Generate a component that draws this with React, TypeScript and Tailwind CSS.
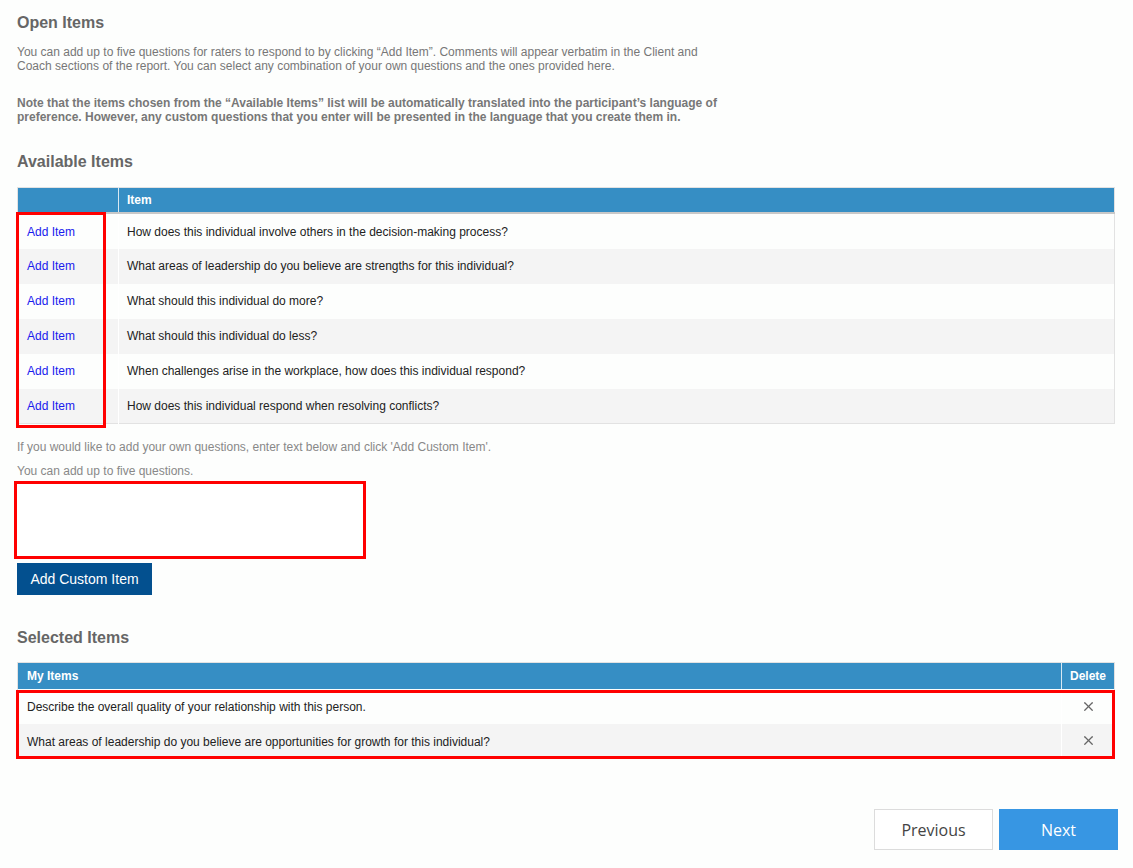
import { X } from "lucide-react";

const availableItems = [
  "How does this individual involve others in the decision-making process?",
  "What areas of leadership do you believe are strengths for this individual?",
  "What should this individual do more?",
  "What should this individual do less?",
  "When challenges arise in the workplace, how does this individual respond?",
  "How does this individual respond when resolving conflicts?",
];

const selectedItems = [
  "Describe the overall quality of your relationship with this person.",
  "What areas of leadership do you believe are opportunities for growth for this individual?",
];

export default function App() {
  return (
    <div className="min-h-screen bg-[#fdfefd] font-['Liberation_Sans',Arial,sans-serif] text-[12px] text-[#333]">
      <div className="pl-[17px] pr-[15px] pt-[13px] pb-[18px]">
        {/* Intro */}
        <h2 className="text-[16px] leading-[20px] font-bold text-[#666]">Open Items</h2>
        <p className="mt-[12px] max-w-[710px] leading-[14px] text-[#777]">
          You can add up to five questions for raters to respond to by clicking “Add Item”. Comments will appear
          verbatim in the Client and Coach sections of the report. You can select any combination of your own
          questions and the ones provided here.
        </p>
        <p className="mt-[23px] max-w-[710px] leading-[14px] font-bold text-[#777]">
          Note that the items chosen from the “Available Items” list will be automatically translated into the
          participant’s language of preference. However, any custom questions that you enter will be presented in
          the language that you create them in.
        </p>

        {/* Available items */}
        <h2 className="mt-[28px] text-[16px] leading-[20px] font-bold text-[#666]">Available Items</h2>
        <div className="relative mt-[15px] w-[1098px]">
          <table className="w-full border-collapse border border-[#e2e2e2]">
            <thead>
              <tr className="bg-[#368ec4] text-left text-white border-b-2 border-b-[#c8c8c8]">
                <th className="h-[25px] w-[101px] border-r border-r-[#d8e8f2] px-[9px] font-bold"></th>
                <th className="h-[25px] px-[8px] font-bold">Item</th>
              </tr>
            </thead>
            <tbody>
              {availableItems.map((item, i) => (
                <tr key={item} className={i % 2 ? "bg-[#f4f4f4]" : "bg-[#fdfefd]"}>
                  <td className={`${i === 0 ? "h-[36px] pt-[1px]" : "h-[35px]"} border-r border-r-white px-[9px]`}>
                    <a className="cursor-pointer text-[#1a1aee]">Add Item</a>
                  </td>
                  <td className={`${i === 0 ? "h-[36px] pt-[1px]" : "h-[35px]"} px-[8px] text-[#222]`}>{item}</td>
                </tr>
              ))}
            </tbody>
          </table>
          <div className="pointer-events-none absolute left-[-1px] top-[25px] h-[216px] w-[90px] border-[3px] border-[#ff0000]" />
        </div>

        {/* Custom items */}
        <p className="mt-[16px] leading-[14px] text-[#888]">
          If you would like to add your own questions, enter text below and click 'Add Custom Item'.
        </p>
        <p className="mt-[10px] leading-[14px] text-[#888]">You can add up to five questions.</p>
        <textarea className="mt-[3px] ml-[-3px] block h-[78px] w-[352px] resize-none border-[3px] border-[#ff0000] bg-white outline-none" />
        <button className="mt-[4px] h-[32px] w-[135px] bg-[#03508f] text-[14px] text-white">Add Custom Item</button>

        {/* Selected items */}
        <h2 className="mt-[33px] text-[16px] leading-[20px] font-bold text-[#666]">Selected Items</h2>
        <div className="relative mt-[14px] w-[1098px]">
          <table className="w-full border-collapse border border-[#e2e2e2]">
            <thead>
              <tr className="bg-[#368ec4] text-left text-white">
                <th className="h-[26px] px-[9px] font-bold">My Items</th>
                <th className="h-[26px] w-[53px] border-l border-l-[#d8e8f2] text-center font-bold">Delete</th>
              </tr>
            </thead>
            <tbody>
              {selectedItems.map((item, i) => (
                <tr key={item} className={i % 2 ? "bg-[#f4f4f4]" : "bg-[#fdfefd]"}>
                  <td className="h-[35px] px-[9px] pt-[2px] text-[#222]">{item}</td>
                  <td className="h-[35px] border-l border-l-white">
                    <X className="mx-auto h-[15px] w-[15px] text-[#666]" strokeWidth={2} />
                  </td>
                </tr>
              ))}
            </tbody>
          </table>
          <div className="pointer-events-none absolute left-[-1px] top-[28px] h-[69px] w-[1099px] border-[3px] border-[#ff0000]" />
        </div>

        {/* Navigation */}
        <div className="mt-[50px] flex justify-end gap-[6px] font-['Open_Sans',sans-serif] text-[16px]">
          <button className="h-[41px] w-[119px] border border-[#dcdcdc] bg-white text-[#444]">Previous</button>
          <button className="h-[41px] w-[119px] bg-[#3796e3] text-white">Next</button>
        </div>
      </div>
    </div>
  );
}
